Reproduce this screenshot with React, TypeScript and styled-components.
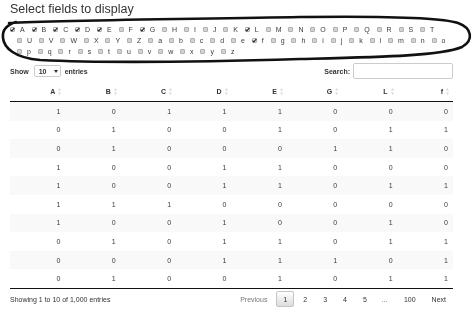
import React from "react"
import styled, { createGlobalStyle } from "styled-components"

const GlobalStyle = createGlobalStyle`
  html, body {
    margin: 0;
    padding: 0;
    background: #fff;
  }

  body {
    font-family: "Liberation Sans", Arial, sans-serif;
    color: #333;
    -webkit-font-smoothing: antialiased;
  }
`

const Page = styled.div`
  position: relative;
  width: 443px;
  padding: 2px 21px 0 10px;
  filter: grayscale(1);
`

const Title = styled.h4`
  margin: 0;
  font-size: 12.5px;
  font-weight: normal;
  line-height: 15px;
  color: #333;
`

const FieldGroup = styled.div`
  display: flex;
  flex-wrap: wrap;
  width: 445px;
  margin-top: 6.5px;
`

const FieldItem = styled.label`
  display: inline-flex;
  align-items: center;
  height: 11px;
  font-size: 7px;
  color: #3a3a3a;

  & + & {
    margin-left: 6.9px;
  }
`

const Box = styled.span<{ $checked: boolean }>`
  box-sizing: border-box;
  display: inline-flex;
  align-items: center;
  justify-content: center;
  width: 5px;
  height: 5px;
  margin-right: 5px;
  border: 1px solid #b0b0b0;
  border-radius: 1px;
  background: ${(p) => (p.$checked ? "#f2f2f2" : "#d3d3d3")};

  svg {
    width: 5px;
    height: 5px;
    flex-shrink: 0;
  }
`

const Loop = styled.svg`
  position: absolute;
  top: 0;
  left: 0;
  width: 474px;
  height: 70px;
  pointer-events: none;
`

const Controls = styled.div`
  display: flex;
  justify-content: space-between;
  align-items: center;
  margin-top: 6.5px;
  height: 16px;
  font-size: 7px;
  font-weight: bold;
  color: #333;
`

const Inline = styled.div`
  display: flex;
  align-items: center;
`

const LengthSelect = styled.div`
  box-sizing: border-box;
  display: flex;
  align-items: center;
  justify-content: space-between;
  width: 27px;
  height: 12px;
  margin: 0 4px 0 5px;
  padding: 0 2px 0 4px;
  border: 1px solid #ccc;
  border-radius: 2px;
  background: #fff;
  font-weight: bold;
  color: #333;
`

const SearchBox = styled.input`
  box-sizing: border-box;
  width: 100px;
  height: 16px;
  margin: 0 0 0 3px;
  padding: 0 3px;
  border: 1px solid #ccc;
  border-radius: 2px;
  font-size: 7px;
  outline: none;
`

const Table = styled.table`
  width: 100%;
  margin-top: 3px;
  border-collapse: collapse;
  table-layout: fixed;
  font-size: 7px;
`

const HeadCell = styled.th`
  height: 19px;
  padding: 0 4px 0 0;
  text-align: right;
  font-weight: bold;
  color: #333;
  border-bottom: 1px solid #111;

  span {
    display: inline-flex;
    align-items: center;
    gap: 3px;
  }
`

const Row = styled.tr<{ $odd: boolean }>`
  background: ${(p) => (p.$odd ? "#f9f9f9" : "#fff")};

  & + & td {
    border-top: 1px solid #ddd;
  }

  &:last-child td {
    border-bottom: 1px solid #111;
  }
`

const Cell = styled.td`
  height: 18.6px;
  padding: 0 5px 0 0;
  text-align: right;
  color: #3a3a3a;
`

const Footer = styled.div`
  display: flex;
  justify-content: space-between;
  align-items: center;
  height: 19px;
  margin-top: 1px;
  font-size: 7px;
  color: #333;
`

const Pager = styled.div`
  display: flex;
  align-items: center;
`

const PageButton = styled.span<{ $current?: boolean; $disabled?: boolean }>`
  box-sizing: border-box;
  display: inline-flex;
  align-items: center;
  height: 16px;
  margin-left: 2px;
  padding: 0 6px;
  border: 1px solid ${(p) => (p.$current ? "#c4c4c4" : "transparent")};
  border-radius: 2px;
  background: ${(p) => (p.$current ? "linear-gradient(#ffffff, #dcdcdc)" : "transparent")};
  color: ${(p) => (p.$disabled ? "#777" : "#333")};
`

const Ellipsis = styled.span`
  padding: 0 7px;
  color: #555;
`

const fields = [
  ..."ABCDEFGHIJKLMNOPQRSTUVWXYZ",
  ..."abcdefghijklmnopqrstuvwxyz",
]
const checked = ["A", "B", "C", "D", "E", "G", "L", "f"]

const rows = [
  [1, 0, 1, 1, 1, 0, 0, 0],
  [0, 1, 0, 0, 1, 0, 1, 1],
  [0, 1, 0, 0, 0, 1, 1, 0],
  [1, 0, 0, 1, 1, 0, 0, 0],
  [1, 0, 0, 1, 1, 0, 1, 1],
  [1, 1, 1, 0, 0, 0, 0, 0],
  [1, 0, 0, 1, 0, 0, 1, 0],
  [0, 1, 0, 1, 1, 0, 1, 1],
  [0, 0, 0, 1, 1, 1, 0, 1],
  [0, 1, 0, 0, 1, 0, 1, 1],
]

function SortIcon() {
  return (
    <svg width="3" height="7" viewBox="0 0 3 7" aria-hidden="true">
      <path d="M1.5 0 L3 2.6 L0 2.6 Z" fill="#d8d8d8" />
      <path d="M1.5 7 L3 4.4 L0 4.4 Z" fill="#d8d8d8" />
    </svg>
  )
}

function Field({ name }: { name: string }) {
  const on = checked.includes(name)
  return (
    <FieldItem>
      <Box $checked={on}>
        {on && (
          <svg viewBox="0 0 5 5" aria-hidden="true">
            <path d="M0.6 2.6 L1.9 3.9 L4.4 0.9" fill="none" stroke="#222" strokeWidth="1.1" />
          </svg>
        )}
      </Box>
      {name}
    </FieldItem>
  )
}

export default function App() {
  return (
    <>
      <GlobalStyle />
      <Page>
        <Title>Select fields to display</Title>

        <FieldGroup>
          {fields.map((f) => (
            <Field key={f} name={f} />
          ))}
        </FieldGroup>

        <Controls>
          <Inline>
            Show
            <LengthSelect>
              10
              <svg width="4" height="3" viewBox="0 0 4 3" aria-hidden="true">
                <path d="M0 0 L4 0 L2 3 Z" fill="#333" />
              </svg>
            </LengthSelect>
            entries
          </Inline>
          <Inline>
            Search:
            <SearchBox type="text" />
          </Inline>
        </Controls>

        <Table>
          <thead>
            <tr>
              {checked.map((c) => (
                <HeadCell key={c}>
                  <span>
                    {c}
                    <SortIcon />
                  </span>
                </HeadCell>
              ))}
            </tr>
          </thead>
          <tbody>
            {rows.map((r, i) => (
              <Row key={i} $odd={i % 2 === 0}>
                {r.map((v, j) => (
                  <Cell key={j}>{v}</Cell>
                ))}
              </Row>
            ))}
          </tbody>
        </Table>

        <Footer>
          <span>Showing 1 to 10 of 1,000 entries</span>
          <Pager>
            <PageButton $disabled>Previous</PageButton>
            <PageButton $current>1</PageButton>
            <PageButton>2</PageButton>
            <PageButton>3</PageButton>
            <PageButton>4</PageButton>
            <PageButton>5</PageButton>
            <Ellipsis>…</Ellipsis>
            <PageButton>100</PageButton>
            <PageButton>Next</PageButton>
          </Pager>
        </Footer>

        {/* hand-drawn marker loop around the field picker */}
        <Loop viewBox="0 0 474 70" aria-hidden="true">
          <path
            d="M9 23 C60 20 200 19 300 17 C380 16 440 17 458 23 C472 28 474 40 462 47 C440 56 380 57 300 59 C200 62 100 63 40 60 C15 58 4 48 3 38 C2 30 6 25 16 22"
            fill="none"
            stroke="#111"
            strokeWidth="2.6"
            strokeLinecap="round"
          />
        </Loop>
      </Page>
    </>
  )
}
